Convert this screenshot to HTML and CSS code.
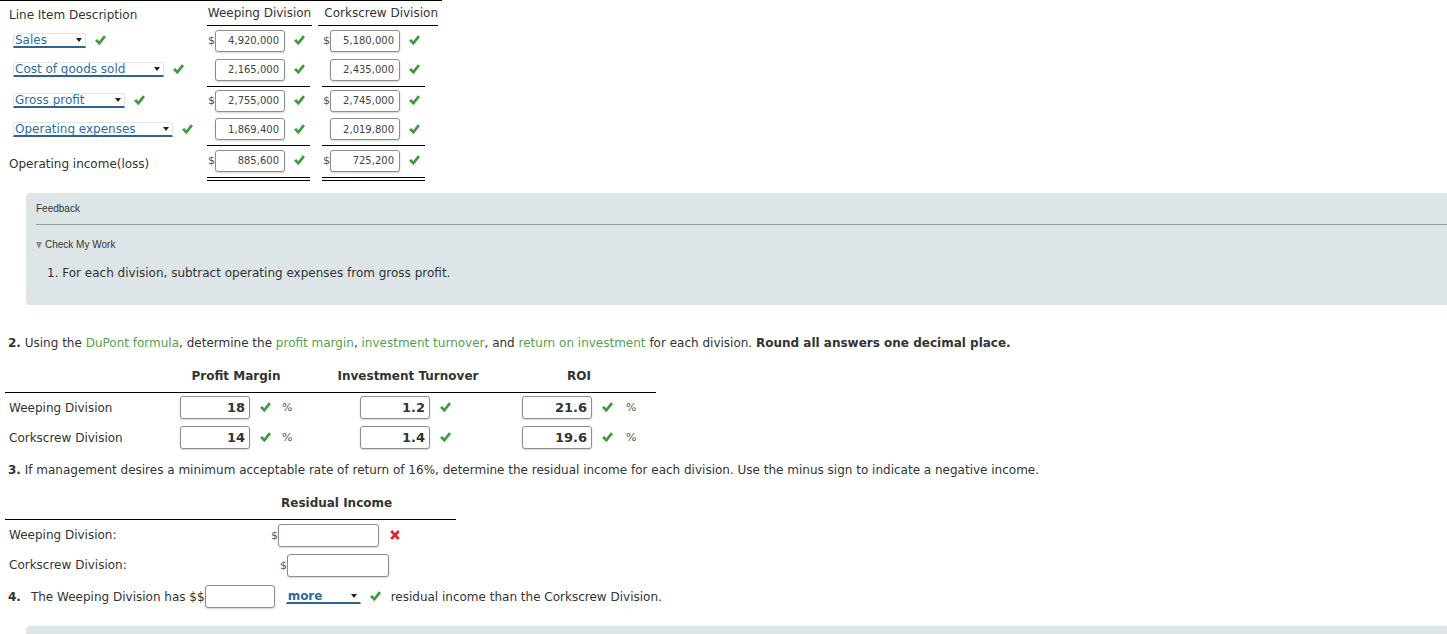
FILE: index.html
```html
<!DOCTYPE html>
<html lang="en">
<head>
    <meta charset="UTF-8">
    <title>Divisional Performance</title>
    <link rel="stylesheet" href="styles.css">
</head>
<body>
<div class="fin">
    <div class="fin-head">
        <div class="desc head-desc">Line Item Description</div>
        <div class="div-head w">Weeping Division</div>
        <div class="div-head c">Corkscrew Division</div>
    </div>

    <div class="fin-row r-a">
        <div class="desc"><span class="sel sel-sales">Sales</span><svg class="ok" viewBox="0 0 12 12"><path d="M0 6.4 L2.5 4.3 L4.6 6.7 L9.7 0.2 L12 2.1 L4.8 11.3 Z"/></svg></div>
        <div class="val w"><span class="cur">$</span><span class="box">4,920,000</span><svg class="ok" viewBox="0 0 12 12"><path d="M0 6.4 L2.5 4.3 L4.6 6.7 L9.7 0.2 L12 2.1 L4.8 11.3 Z"/></svg></div>
        <div class="val c"><span class="cur">$</span><span class="box">5,180,000</span><svg class="ok" viewBox="0 0 12 12"><path d="M0 6.4 L2.5 4.3 L4.6 6.7 L9.7 0.2 L12 2.1 L4.8 11.3 Z"/></svg></div>
    </div>
    <div class="fin-row r-a">
        <div class="desc"><span class="sel sel-cogs">Cost of goods sold</span><svg class="ok" viewBox="0 0 12 12"><path d="M0 6.4 L2.5 4.3 L4.6 6.7 L9.7 0.2 L12 2.1 L4.8 11.3 Z"/></svg></div>
        <div class="val w"><span class="cur blank">$</span><span class="box">2,165,000</span><svg class="ok" viewBox="0 0 12 12"><path d="M0 6.4 L2.5 4.3 L4.6 6.7 L9.7 0.2 L12 2.1 L4.8 11.3 Z"/></svg></div>
        <div class="val c"><span class="cur blank">$</span><span class="box">2,435,000</span><svg class="ok" viewBox="0 0 12 12"><path d="M0 6.4 L2.5 4.3 L4.6 6.7 L9.7 0.2 L12 2.1 L4.8 11.3 Z"/></svg></div>
    </div>
    <div class="rule rule-gap2"><span></span><span></span></div>

    <div class="fin-row r-b">
        <div class="desc"><span class="sel sel-gp">Gross profit</span><svg class="ok" viewBox="0 0 12 12"><path d="M0 6.4 L2.5 4.3 L4.6 6.7 L9.7 0.2 L12 2.1 L4.8 11.3 Z"/></svg></div>
        <div class="val w"><span class="cur">$</span><span class="box">2,755,000</span><svg class="ok" viewBox="0 0 12 12"><path d="M0 6.4 L2.5 4.3 L4.6 6.7 L9.7 0.2 L12 2.1 L4.8 11.3 Z"/></svg></div>
        <div class="val c"><span class="cur">$</span><span class="box">2,745,000</span><svg class="ok" viewBox="0 0 12 12"><path d="M0 6.4 L2.5 4.3 L4.6 6.7 L9.7 0.2 L12 2.1 L4.8 11.3 Z"/></svg></div>
    </div>
    <div class="fin-row r-c">
        <div class="desc"><span class="sel sel-oe">Operating expenses</span><svg class="ok" viewBox="0 0 12 12"><path d="M0 6.4 L2.5 4.3 L4.6 6.7 L9.7 0.2 L12 2.1 L4.8 11.3 Z"/></svg></div>
        <div class="val w"><span class="cur blank">$</span><span class="box">1,869,400</span><svg class="ok" viewBox="0 0 12 12"><path d="M0 6.4 L2.5 4.3 L4.6 6.7 L9.7 0.2 L12 2.1 L4.8 11.3 Z"/></svg></div>
        <div class="val c"><span class="cur blank">$</span><span class="box">2,019,800</span><svg class="ok" viewBox="0 0 12 12"><path d="M0 6.4 L2.5 4.3 L4.6 6.7 L9.7 0.2 L12 2.1 L4.8 11.3 Z"/></svg></div>
    </div>
    <div class="rule rule-gap1"><span></span><span></span></div>

    <div class="fin-row r-a">
        <div class="desc plain">Operating income(loss)</div>
        <div class="val w"><span class="cur">$</span><span class="box">885,600</span><svg class="ok" viewBox="0 0 12 12"><path d="M0 6.4 L2.5 4.3 L4.6 6.7 L9.7 0.2 L12 2.1 L4.8 11.3 Z"/></svg></div>
        <div class="val c"><span class="cur">$</span><span class="box">725,200</span><svg class="ok" viewBox="0 0 12 12"><path d="M0 6.4 L2.5 4.3 L4.6 6.7 L9.7 0.2 L12 2.1 L4.8 11.3 Z"/></svg></div>
    </div>
    <div class="rule double"><span></span><span></span></div>
</div>

<div class="feedback">
    <div class="fb-title">Feedback</div>
    <div class="fb-toggle"><span class="tri"></span>Check My Work</div>
    <p class="fb-text">1. For each division, subtract operating expenses from gross profit.</p>
</div>

<p class="q q2"><b>2.</b> Using the <span class="term">DuPont formula</span>, determine the <span class="term">profit margin</span>, <span class="term">investment turnover</span>, and <span class="term">return on investment</span> for each division. <b class="note">Round all answers one decimal place.</b></p>

<div class="dupont">
    <div class="th"></div>
    <div class="th">Profit Margin</div>
    <div class="th">Investment Turnover</div>
    <div class="th th-roi">ROI</div>

    <div class="td label">Weeping Division</div>
    <div class="td pm"><span class="box num">18</span><svg class="ok" viewBox="0 0 12 12"><path d="M0 6.4 L2.5 4.3 L4.6 6.7 L9.7 0.2 L12 2.1 L4.8 11.3 Z"/></svg><span class="pct">%</span></div>
    <div class="td it"><span class="box num">1.2</span><svg class="ok" viewBox="0 0 12 12"><path d="M0 6.4 L2.5 4.3 L4.6 6.7 L9.7 0.2 L12 2.1 L4.8 11.3 Z"/></svg></div>
    <div class="td roi"><span class="box num">21.6</span><svg class="ok" viewBox="0 0 12 12"><path d="M0 6.4 L2.5 4.3 L4.6 6.7 L9.7 0.2 L12 2.1 L4.8 11.3 Z"/></svg><span class="pct">%</span></div>

    <div class="td label">Corkscrew Division</div>
    <div class="td pm"><span class="box num">14</span><svg class="ok" viewBox="0 0 12 12"><path d="M0 6.4 L2.5 4.3 L4.6 6.7 L9.7 0.2 L12 2.1 L4.8 11.3 Z"/></svg><span class="pct">%</span></div>
    <div class="td it"><span class="box num">1.4</span><svg class="ok" viewBox="0 0 12 12"><path d="M0 6.4 L2.5 4.3 L4.6 6.7 L9.7 0.2 L12 2.1 L4.8 11.3 Z"/></svg></div>
    <div class="td roi"><span class="box num">19.6</span><svg class="ok" viewBox="0 0 12 12"><path d="M0 6.4 L2.5 4.3 L4.6 6.7 L9.7 0.2 L12 2.1 L4.8 11.3 Z"/></svg><span class="pct">%</span></div>
</div>

<p class="q q3"><b>3.</b> If management desires a minimum acceptable rate of return of 16%, determine the residual income for each division. Use the minus sign to indicate a negative income.</p>

<div class="resid">
    <div class="th"></div>
    <div class="th th-ri">Residual Income</div>

    <div class="td label">Weeping Division:</div>
    <div class="td ri-w"><span class="cur">$</span><span class="box wide"></span><svg class="bad" viewBox="0 0 10 10"><path d="M1.2 1 L8.8 9 M8.8 1 L1.2 9"/></svg></div>

    <div class="td label">Corkscrew Division:</div>
    <div class="td ri-c"><span class="cur">$</span><span class="box wide"></span></div>
</div>

<div class="q4">
    <b class="q4-num">4.</b>
    <span>The Weeping Division has $$</span><span class="box amt"></span>
    <span class="sel sel-more">more</span><svg class="ok" viewBox="0 0 12 12"><path d="M0 6.4 L2.5 4.3 L4.6 6.7 L9.7 0.2 L12 2.1 L4.8 11.3 Z"/></svg>
    <span class="q4-tail">residual income than the Corkscrew Division.</span>
</div>

<div class="next-box"></div>
</body>
</html>
```

FILE: styles.css
```css
/* reset */
* {
    margin: 0;
    padding: 0;
    box-sizing: border-box;
}
body {
    font-family: "DejaVu Sans", Verdana, sans-serif;
    font-size: 12px;
    color: #333;
    background: #fff;
}

/* check / cross icons */
.ok {
    width: 11px;
    height: 11px;
    fill: #3d9a3d;
    flex: none;
}
.bad {
    width: 10px;
    height: 10px;
    stroke: #e3202c;
    stroke-width: 2.6;
    fill: none;
    flex: none;
}

/* input look-alike */
.box {
    display: inline-flex;
    align-items: center;
    justify-content: flex-end;
    width: 70px;
    height: 22px;
    padding-right: 5px;
    border: 1px solid #8e8e8e;
    border-radius: 3px;
    box-shadow: 0 1px 2px rgba(0, 0, 0, .18);
    background: #fff;
    font-size: 10px;
    color: #444;
    flex: none;
}
.box.num {
    height: 23px;
    padding-right: 4px;
    font-size: 13px;
    font-weight: bold;
    color: #333;
}
.cur {
    width: 7px;
    font-size: 11px;
    color: #555;
    flex: none;
}
.cur.blank {
    visibility: hidden;
}

/* select look-alike */
.sel {
    display: inline-flex;
    align-items: center;
    justify-content: space-between;
    height: 15px;
    padding-left: 1px;
    border: 1px solid #e4e4e4;
    border-bottom: 2px solid #2f6391;
    border-radius: 2px 2px 0 0;
    color: #2d6ca3;
    font-size: 12px;
    line-height: 12px;
    flex: none;
}
.sel::after {
    content: '';
    margin-right: 3px;
    border-width: 4px 3px 0;
    border-style: solid;
    border-color: #222 transparent transparent;
}
.sel-sales { width: 73px; }
.sel-cogs { width: 151px; }
.sel-gp { width: 112px; }
.sel-oe { width: 160px; }

/* income statement */
.fin {
    width: 442px;
    border-top: 1px solid #000;
}
.fin-head {
    display: flex;
    height: 25px;
}
.fin-head .desc {
    align-self: flex-end;
    padding-left: 9px;
    padding-bottom: 3px;
}
.div-head {
    height: 25px;
    padding-top: 4px;
    border-bottom: 1px solid #000;
    line-height: 16px;
    white-space: nowrap;
}
.div-head.w {
    width: 105px;
    text-align: center;
}
.div-head.c {
    width: 120px;
    margin-left: 6px;
    text-align: right;
}
.fin-row {
    display: flex;
    align-items: center;
}
.r-a { height: 29px; }
.r-b { height: 27px; }
.r-c { height: 30px; }
.desc {
    display: flex;
    align-items: center;
    width: 207px;
    padding-left: 13px;
    line-height: 16px;
}
.desc .ok {
    margin-left: 9px;
}
.desc.plain {
    padding-left: 9px;
    padding-top: 7px;
}
.val {
    display: flex;
    align-items: center;
}
.val.w {
    width: 111px;
    padding-left: 1px;
}
.val.c {
    width: 120px;
    padding-left: 5px;
}
.val .ok {
    margin-left: 9px;
}
.rule {
    display: flex;
}
.rule span {
    display: block;
    width: 103px;
    height: 1px;
    background: #000;
}
.rule span:first-child {
    margin-left: 207px;
}
.rule span + span {
    margin-left: 12px;
}
.rule-gap2 { margin-top: 2px; }
.rule-gap1 { margin-top: 1px; }
.rule.double {
    margin-top: 2px;
}
.rule.double span {
    height: 4px;
    background: none;
    border-top: 1px solid #000;
    border-bottom: 1px solid #000;
}

/* feedback panel */
.feedback {
    margin: 12px 0 0 26px;
    height: 112px;
    padding-left: 10px;
    background: #dee5e8;
    border-radius: 4px 0 0 4px;
}
.fb-title {
    height: 32px;
    padding-top: 10px;
    border-bottom: 1px solid #97a0a5;
    font-family: "Liberation Sans", Arial, sans-serif;
    font-size: 10px;
    line-height: 12px;
}
.fb-toggle {
    display: flex;
    align-items: center;
    margin-top: 14px;
    font-family: "Liberation Sans", Arial, sans-serif;
    font-size: 10px;
    line-height: 12px;
}
.tri {
    margin-right: 3px;
    border-width: 7px 3px 0;
    border-style: solid;
    border-color: #8d8d8d transparent transparent;
}
.fb-text {
    margin-top: 14px;
    padding-left: 11px;
    line-height: 16px;
}

/* questions */
.q {
    margin-left: 8px;
    line-height: 16px;
}
.q2 { margin-top: 30px; }
.q3 { margin-top: 9px; }
.term {
    color: #559f55;
}
.note {
    color: #333;
}

/* dupont table */
.dupont {
    display: grid;
    grid-template-columns: 167px 128px 216px 140px;
    grid-template-rows: 27px 29px 31px;
    margin: 15px 0 0 5px;
    width: 651px;
}
.th {
    padding-top: 2px;
    border-bottom: 1px solid #000;
    font-weight: bold;
    line-height: 16px;
    text-align: center;
}
.th-roi {
    padding-right: 14px;
}
.td {
    display: flex;
    align-items: center;
}
.td.label {
    padding-left: 4px;
}
.td .ok {
    margin-left: 10px;
}
.pct {
    margin-left: 11px;
    font-size: 11px;
    color: #555;
}
.pm { padding-left: 8px; }
.it { padding-left: 60px; }
.roi { padding-left: 6px; }
.roi .pct { margin-left: 13px; }

/* residual income */
.resid {
    display: grid;
    grid-template-columns: 256px 195px;
    grid-template-rows: 27px 30px 30px;
    margin: 15px 0 0 5px;
    width: 451px;
}
.th-ri {
    padding-left: 20px;
    text-align: left;
}
.box.wide {
    width: 101px;
    height: 23px;
}
.ri-c .box.wide {
    width: 102px;
}
.ri-w { padding-left: 10px; }
.ri-c { padding-left: 19px; }
.bad {
    margin-left: 11px;
}

/* question 4 */
.q4 {
    display: flex;
    align-items: center;
    height: 33px;
    padding-left: 8px;
}
.q4-num {
    margin-right: 10px;
}
.box.amt {
    width: 70px;
    height: 23px;
}
.sel-more {
    width: 75px;
    margin-left: 11px;
    font-weight: bold;
    border-top-color: #fff;
    border-left-color: #fff;
    border-right-color: #fff;
}
.q4 .ok {
    margin-left: 9px;
}
.q4-tail {
    margin-left: 10px;
}

.next-box {
    margin: 13px 0 0 26px;
    height: 8px;
    background: #dee5e8;
    border-radius: 4px 0 0 0;
}
```
